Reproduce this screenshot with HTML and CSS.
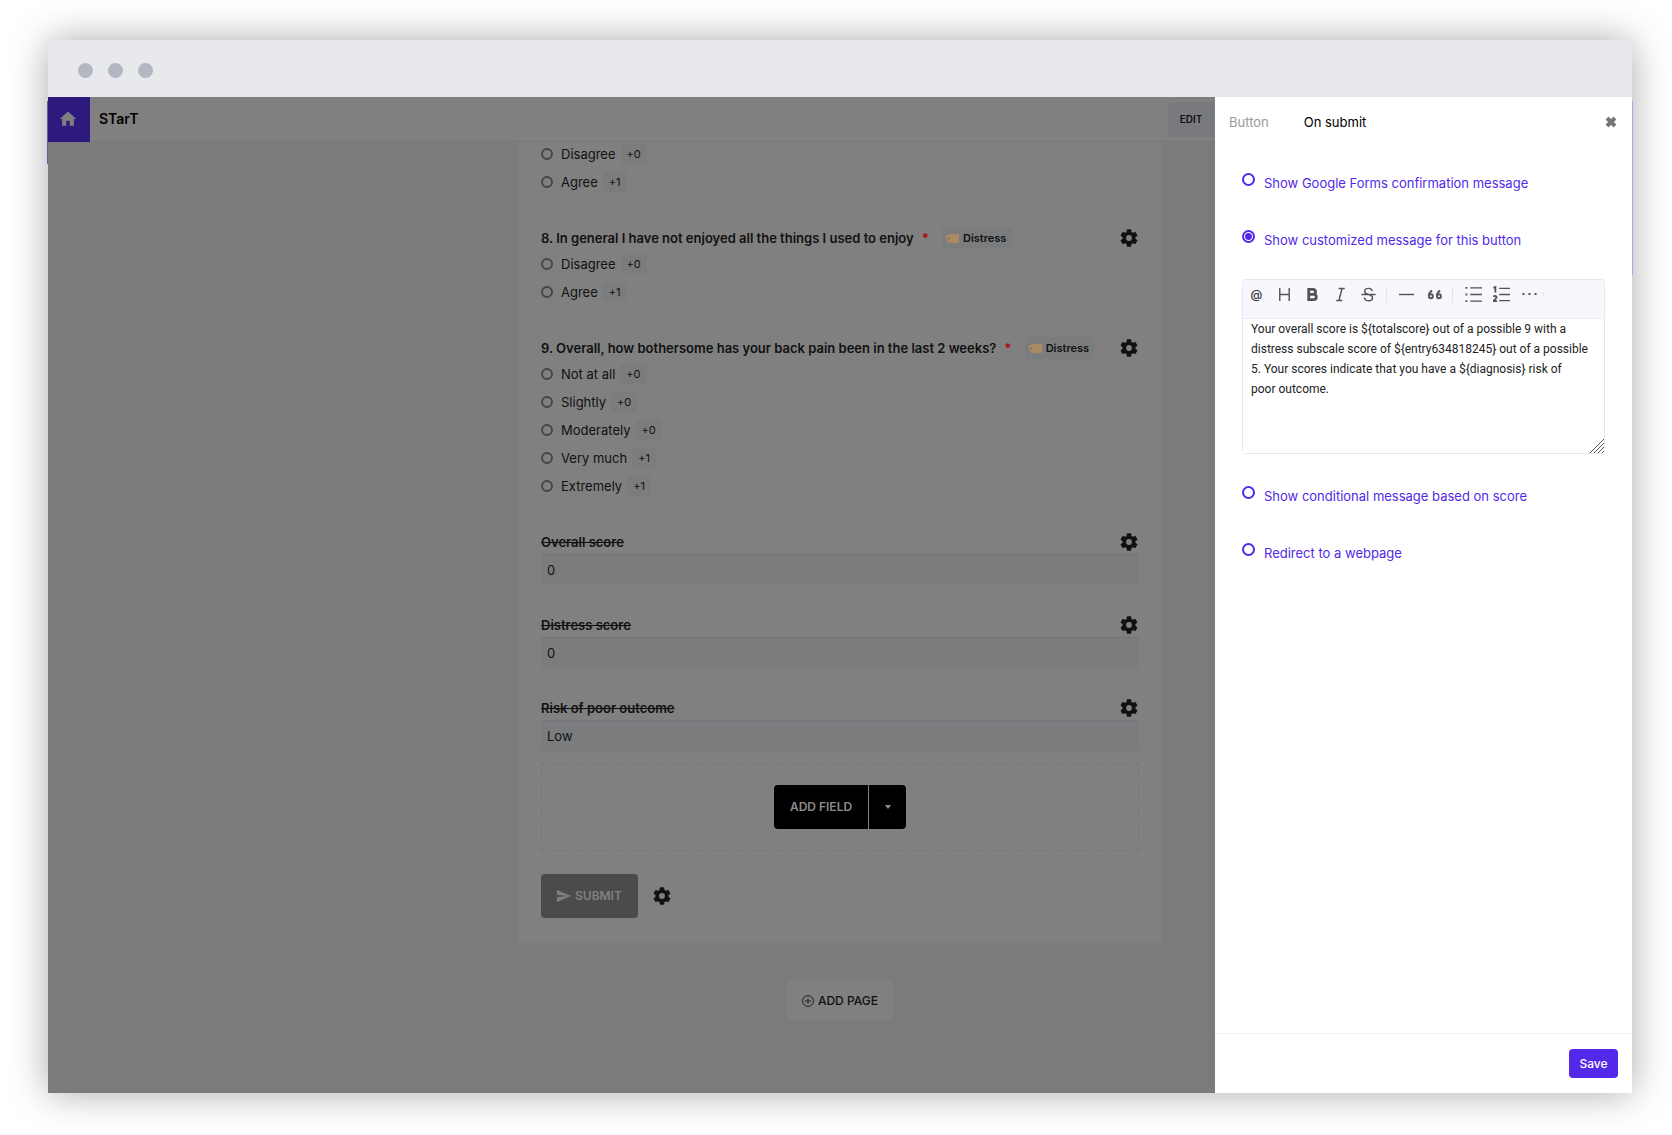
FILE: index.html
```html
<!DOCTYPE html>
<html lang="en">
<head>
<meta charset="utf-8">
<title>STarT</title>
<link rel="stylesheet" href="styles.css">
</head>
<body>
<svg class="sprite" aria-hidden="true">
  <symbol id="gear" viewBox="2 2 20 20"><path d="M19.14 12.94c.04-.3.06-.61.06-.94 0-.32-.02-.64-.07-.94l2.03-1.58a.49.49 0 0 0 .12-.61l-1.92-3.32a.49.49 0 0 0-.59-.22l-2.39.96c-.5-.38-1.03-.7-1.62-.94l-.36-2.54a.48.48 0 0 0-.48-.41h-3.84a.47.47 0 0 0-.47.41l-.36 2.54c-.59.24-1.13.57-1.62.94l-2.39-.96a.48.48 0 0 0-.59.22L2.74 8.87a.47.47 0 0 0 .12.61l2.03 1.58c-.05.3-.09.63-.09.94s.02.64.07.94l-2.03 1.58a.49.49 0 0 0-.12.61l1.92 3.32c.12.22.37.29.59.22l2.39-.96c.5.38 1.03.7 1.62.94l.36 2.54c.05.24.24.41.48.41h3.84c.24 0 .44-.17.47-.41l.36-2.54c.59-.24 1.13-.56 1.62-.94l2.39.96c.22.08.47 0 .59-.22l1.92-3.32a.47.47 0 0 0-.12-.61zM12 15.2a3.2 3.2 0 1 1 0-6.4 3.2 3.2 0 0 1 0 6.4z"/></symbol>
  <symbol id="tag" viewBox="0 0 13 9"><path d="M3 0h9a1 1 0 0 1 1 1v7a1 1 0 0 1-1 1H3L0 6.500V2.500z"/><circle cx="2.500" cy="4.500" r="1" fill="#8a6a45"/></symbol>
</svg>
<div class="window">
  <div class="titlebar"><span class="dot"></span><span class="dot"></span><span class="dot"></span></div>
  <div class="app">
    <header class="topbar">
      <a class="home" href="#" aria-label="Home"><svg viewBox="0 0 24 24" width="20" height="20"><path d="M10 20v-6h4v6h5v-8h3L12 3 2 12h3v8z"/></svg></a>
      <h1 class="form-name">STarT</h1>
      <button class="edit" type="button">EDIT</button>
    </header>

    <main class="canvas">
      <form class="card">
        <fieldset class="question">
          <div class="options">
            <label class="option"><input type="radio" name="q7">Disagree<span class="score">+0</span></label>
            <label class="option"><input type="radio" name="q7">Agree<span class="score">+1</span></label>
          </div>
        </fieldset>

        <fieldset class="question" aria-labelledby="q8">
          <div class="heading">
            <span class="title" id="q8">8. In general I have not enjoyed all the things I used to enjoy</span>
            <span class="required">*</span>
            <span class="tag"><svg width="13" height="9"><use href="#tag"/></svg>Distress</span>
            <button class="settings" type="button" aria-label="Question 8 settings"><svg width="18" height="18"><use href="#gear"/></svg></button>
          </div>
          <div class="options">
            <label class="option"><input type="radio" name="q8">Disagree<span class="score">+0</span></label>
            <label class="option"><input type="radio" name="q8">Agree<span class="score">+1</span></label>
          </div>
        </fieldset>

        <fieldset class="question" aria-labelledby="q9">
          <div class="heading">
            <span class="title" id="q9">9. Overall, how bothersome has your back pain been in the last 2 weeks?</span>
            <span class="required">*</span>
            <span class="tag"><svg width="13" height="9"><use href="#tag"/></svg>Distress</span>
            <button class="settings" type="button" aria-label="Question 9 settings"><svg width="18" height="18"><use href="#gear"/></svg></button>
          </div>
          <div class="options">
            <label class="option"><input type="radio" name="q9">Not at all<span class="score">+0</span></label>
            <label class="option"><input type="radio" name="q9">Slightly<span class="score">+0</span></label>
            <label class="option"><input type="radio" name="q9">Moderately<span class="score">+0</span></label>
            <label class="option"><input type="radio" name="q9">Very much<span class="score">+1</span></label>
            <label class="option"><input type="radio" name="q9">Extremely<span class="score">+1</span></label>
          </div>
        </fieldset>

        <div class="fields">
          <div class="field">
            <div class="heading">
              <label class="title hidden-field" for="overall">Overall score</label>
              <button class="settings" type="button" aria-label="Overall score settings"><svg width="18" height="18"><use href="#gear"/></svg></button>
            </div>
            <input class="value" id="overall" type="text" value="0" readonly>
          </div>
          <div class="field">
            <div class="heading">
              <label class="title hidden-field" for="distress">Distress score</label>
              <button class="settings" type="button" aria-label="Distress score settings"><svg width="18" height="18"><use href="#gear"/></svg></button>
            </div>
            <input class="value" id="distress" type="text" value="0" readonly>
          </div>
          <div class="field">
            <div class="heading">
              <label class="title hidden-field" for="risk">Risk of poor outcome</label>
              <button class="settings" type="button" aria-label="Risk of poor outcome settings"><svg width="18" height="18"><use href="#gear"/></svg></button>
            </div>
            <input class="value" id="risk" type="text" value="Low" readonly>
          </div>
        </div>

        <div class="dropzone">
          <button class="add-field" type="button">ADD FIELD</button>
          <button class="add-more" type="button" aria-label="More field types"><svg viewBox="0 0 6 4" width="6" height="4"><path d="M0 0h6L3 4z"/></svg></button>
        </div>

        <div class="actions">
          <button class="submit" type="button"><svg viewBox="2 3 21 18" width="14" height="12"><path d="M2 21l21-9L2 3v7l15 2-15 2z"/></svg>SUBMIT</button>
          <button class="settings" type="button" aria-label="Submit settings"><svg width="18" height="18"><use href="#gear"/></svg></button>
        </div>
      </form>

      <button class="add-page" type="button"><svg viewBox="0 0 12 12" width="12" height="12"><circle cx="6" cy="6" r="5.400"/><path d="M6 3v6M3 6h6"/></svg>ADD PAGE</button>
    </main>

    <aside class="drawer">
      <nav class="tabs">
        <a class="tab" href="#">Button</a>
        <a class="tab current" href="#">On submit</a>
        <button class="close" type="button" aria-label="Close"><svg viewBox="0 0 12 12" width="12" height="12"><path d="M2 2l8 8M10 2l-8 8"/></svg></button>
      </nav>
      <div class="choices">
        <label class="choice"><input type="radio" name="after"><span>Show Google Forms confirmation message</span></label>
        <label class="choice"><input type="radio" name="after" checked><span>Show customized message for this button</span></label>
        <div class="editor">
          <div class="tools">
            <button class="tool at" type="button">@</button>
            <button class="tool" type="button" aria-label="Heading"><svg viewBox="0 0 18 18"><path d="M4 2v14M14 2v14M4 9h10"/></svg></button>
            <button class="tool" type="button" aria-label="Bold"><svg viewBox="0 0 18 18"><path class="heavy" d="M5 3.500h4.500a2.700 2.700 0 0 1 0 5.400H5zM5 8.900h5.200a2.800 2.800 0 0 1 0 5.600H5z"/></svg></button>
            <button class="tool" type="button" aria-label="Italic"><svg viewBox="0 0 18 18"><path d="M7 2.700h6.500M4.500 15.300H11M10.700 2.700L7.300 15.300"/></svg></button>
            <button class="tool" type="button" aria-label="Strikethrough"><svg viewBox="0 0 18 18"><path d="M1.500 9h15M13 5.500C12.600 3.500 11 2.500 9 2.500c-2.300 0-4 1.200-4 3.200C5 7.500 6.500 8.300 9 9c2.800.800 4.300 1.600 4.300 3.400 0 2-1.800 3.200-4.200 3.200-2.500 0-4.300-1.200-4.500-3.400"/></svg></button>
            <span class="rule"></span>
            <button class="tool" type="button" aria-label="Line"><svg viewBox="0 0 18 18"><path d="M1 9h16"/></svg></button>
            <button class="tool" type="button" aria-label="Blockquote"><svg viewBox="0 0 18 18"><path class="mid" d="M6.500 4.800C4 6 3 8 3 10.500M15 4.800c-2.500 1.200-3.500 3.200-3.500 5.700"/><circle class="mid" cx="5.200" cy="10.900" r="2.100"/><circle class="mid" cx="13.700" cy="10.900" r="2.100"/></svg></button>
            <span class="rule wide"></span>
            <button class="tool" type="button" aria-label="Unordered list"><svg viewBox="0 0 18 18"><path d="M5.500 2h12.500M5.500 9h12.500M5.500 16h12.500"/><path class="mid" d="M.5 2h2M.5 9h2M.5 16h2"/></svg></button>
            <button class="tool" type="button" aria-label="Ordered list"><svg viewBox="0 0 18 18"><path d="M6.500 2.500h11.500M6.500 9h11.500M6.500 15.500h11.500"/><path class="mid" d="M.5 2l2-1v6M.5 11.500c.500-1.500 3.300-1.300 3.300.300 0 1.500-2.300 2.500-3.300 4.200h3.800"/></svg></button>
            <button class="tool" type="button" aria-label="More"><svg viewBox="0 0 18 18"><path class="mid" d="M1.500 8.500h2.200M7.900 8.500h2.200M14.300 8.500h2.200"/></svg></button>
            <span class="rule short"></span>
          </div>
          <textarea class="message" aria-label="Message">Your overall score is ${totalscore} out of a possible 9 with a distress subscale score of ${entry634818245} out of a possible 5. Your scores indicate that you have a ${diagnosis} risk of
poor outcome.</textarea>
          <svg class="grip" viewBox="0 0 14 14" width="14" height="14"><path d="M0 14L14 0M4 14L14 4M8 14l6-6M12 14l2-2"/></svg>
        </div>
        <label class="choice"><input type="radio" name="after"><span>Show conditional message based on score</span></label>
        <label class="choice"><input type="radio" name="after"><span>Redirect to a webpage</span></label>
      </div>
      <footer class="drawer-foot"><button class="save" type="button">Save</button></footer>
    </aside>
  </div>
</div>
</body>
</html>
```
FILE: styles.css
```css
* { box-sizing: border-box; }

:root {
  --accent: #5229e8;
  --ink: #111;
  --sheet: #808080;
  --backdrop: #7b7b7b;
  --chip: #7a7c7e;
}

body {
  margin: 0;
  padding: 40px 40px 42px 48px;
  min-height: 100vh;
  display: flex;
  background: #fff;
  color: var(--ink);
  font: 13px/20px Inter, sans-serif;
}

button, input, textarea { font: inherit; color: inherit; }
button { border: 0; padding: 0; background: none; }
a { color: inherit; text-decoration: none; }
fieldset { border: 0; margin: 0; padding: 0; min-width: 0; }
.sprite { position: absolute; width: 0; height: 0; }

.window {
  position: relative;
  flex: 1;
  display: flex;
  flex-direction: column;
  border-radius: 12px 12px 0 0;
  box-shadow: 0 0 38px rgba(0, 0, 0, .34);
}
.window::before,
.window::after {
  content: "";
  position: absolute;
  top: 61px;
  width: 1px;
}
.window::before { right: 100%; height: 63px; background: #6a5aa8; }
.window::after { left: 100%; height: 174px; background: #b79cf8; }

.titlebar {
  display: flex;
  align-items: center;
  gap: 15px;
  height: 57px;
  padding: 4px 30px 0;
  border-radius: 12px 12px 0 0;
  background: #e8e9ed;
}
.dot { width: 15px; height: 15px; border-radius: 50%; background: #b4b6c2; }

.app {
  position: relative;
  flex: 1;
  display: flex;
  flex-direction: column;
  background: var(--backdrop);
}

.topbar {
  display: flex;
  align-items: center;
  height: 45px;
  padding-right: 418px;
  background: var(--sheet);
  border-bottom: 1px solid #787878;
}
.home {
  display: flex;
  align-items: center;
  justify-content: center;
  align-self: stretch;
  width: 42px;
  margin-bottom: -1px;
  padding: 0 2px 2px 0;
  background: #2e1a7e;
  fill: #808080;
}
.form-name { flex: 1; margin: 0 0 0 9px; font-size: 14px; font-weight: 600; color: #000; }
.edit {
  width: 46px;
  height: 35px;
  border-radius: 4px 0 0 4px;
  background: #797a7f;
  font-size: 10px;
  font-weight: 600;
}

.canvas { display: flex; flex-direction: column; align-items: center; gap: 38px; padding-bottom: 73px; }
.card {
  width: 100%;
  max-width: 644px;
  padding: 2px 23px 25px;
  border-radius: 0 0 3px 3px;
  background: var(--sheet);
}
.question { margin-bottom: 35px; }
.heading { display: flex; align-items: center; height: 22px; }
.title { font-weight: 600; }
.hidden-field { text-decoration: line-through 1px; }
.required { margin-left: 8px; color: #a80f0f; font-weight: 700; }
.tag {
  display: flex;
  align-items: center;
  gap: 4px;
  height: 22px;
  margin-left: 13px;
  padding: 0 6px 0 4px;
  border-radius: 3px;
  background: var(--chip);
  font-size: 11px;
  font-weight: 600;
}
.tag svg { fill: #a98a62; }
.settings { display: flex; margin: 0 1px 0 auto; fill: #111; }

.options { display: grid; gap: 8px; }
.heading + .options { margin-top: 5px; }
.option { display: flex; align-items: center; height: 20px; }
.option input {
  appearance: none;
  width: 12px;
  height: 12px;
  margin: 0 8px 0 0;
  border: 2px solid #45464c;
  border-radius: 50%;
}
.score {
  margin-left: 5px;
  padding: 0 6px;
  border-radius: 3px;
  background: var(--chip);
  font-size: 11px;
}

.fields { display: grid; gap: 29px; }
.field { display: grid; gap: 1px; }
.value {
  width: 100%;
  height: 31px;
  padding: 0 6px;
  border: 0;
  border-top: 1px solid #747679;
  border-radius: 3px;
  background: var(--chip);
}

.dropzone {
  display: flex;
  justify-content: center;
  align-items: center;
  gap: 1px;
  height: 88px;
  margin: 12px 0 23px;
  border: 1px dashed #767676;
}
.add-field, .add-more {
  height: 44px;
  background: #000;
  color: #8c8c8c;
  fill: #8c8c8c;
  font-size: 12px;
  font-weight: 600;
}
.add-field { padding: 0 16px; border-radius: 4px 0 0 4px; }
.add-more { display: flex; align-items: center; justify-content: center; width: 37px; border-radius: 0 4px 4px 0; }

.actions { display: flex; align-items: center; gap: 15px; }
.actions .settings { margin-left: 0; }
.submit {
  display: flex;
  align-items: center;
  gap: 4px;
  height: 44px;
  padding: 0 16px;
  border-radius: 4px;
  background: #4b4b4b;
  color: #808080;
  fill: #808080;
  font-size: 12px;
  font-weight: 600;
}
.add-page {
  display: flex;
  align-items: center;
  gap: 4px;
  height: 39px;
  padding: 0 16px;
  border-radius: 3px;
  background: var(--sheet);
  font-size: 12px;
  font-weight: 500;
}
.add-page svg { fill: none; stroke: #222; }

.drawer {
  position: absolute;
  top: 0;
  right: 0;
  bottom: 0;
  width: 417px;
  display: flex;
  flex-direction: column;
  background: #fff;
}
.tabs { display: flex; align-items: center; gap: 35px; height: 50px; padding: 0 15px 0 14px; }
.tab { color: #9b9b9b; }
.tab.current { color: #000; }
.close { display: flex; margin-left: auto; }
.close svg { fill: none; stroke: #777; stroke-width: 4; }

.choices { flex: 1; display: grid; align-content: start; gap: 37px; padding: 26px 27px 0; }
.choice { display: flex; align-items: flex-start; gap: 9px; color: var(--accent); }
.choice input {
  appearance: none;
  width: 13px;
  height: 13px;
  margin: 0;
  border: 2px solid var(--accent);
  border-radius: 50%;
}
.choice input:checked { background: radial-gradient(circle, var(--accent) 3px, #fff 4px); }
.editor { position: relative; border: 1px solid #e6e8f0; border-radius: 4px; margin: -8px 0 -5px; }
.tools { display: flex; height: 39px; padding-bottom: 9px; background: #f7f8fd; border-bottom: 1px solid #ebedf2; }
.tool { display: flex; align-items: center; justify-content: center; width: 28px; color: #333; }
.tool svg { width: 17px; height: 17px; fill: none; stroke: #555; stroke-width: 1.5; }
.tool .heavy { stroke-width: 3; }
.tool .mid { stroke-width: 2; }
.tool.at { width: 27px; font-size: 12px; font-weight: 500; }
.rule { width: 1px; height: 16px; margin: 7px 5px 0 4px; background: #e2e4ea; }
.rule.wide { margin-right: 6px; }
.rule.short { height: 5px; margin: 12px 0 0; }
.message {
  display: block;
  width: 100%;
  height: 134px;
  padding: 0 8px;
  border: 0;
  resize: none;
  background: #fff;
  color: #222;
  font: 12px/20px Roboto, sans-serif;
}
.grip { position: absolute; right: 0; bottom: 0; stroke: #555; }

.drawer-foot { display: flex; justify-content: flex-end; padding: 15px 14px; border-top: 1px solid #f1f1f1; }
.save { width: 49px; height: 29px; border-radius: 4px; background: var(--accent); color: #fff; font-size: 12px; font-weight: 500; }
```
